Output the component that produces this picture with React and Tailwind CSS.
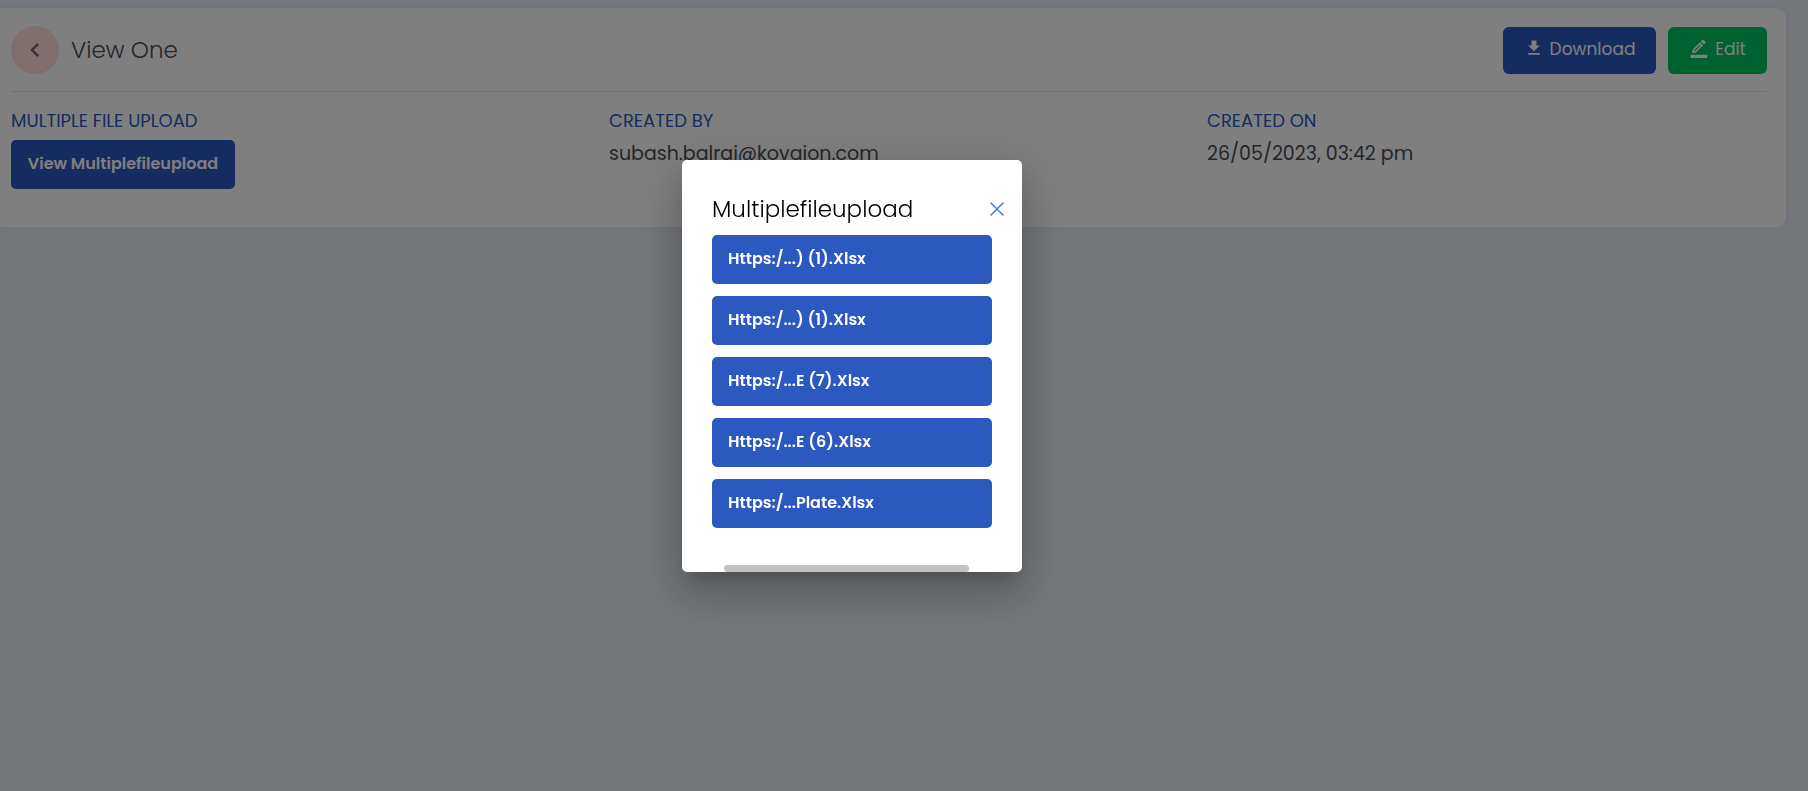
import React from 'react';
import { MdChevronLeft, MdFileDownload, MdOutlineBorderColor } from 'react-icons/md';

const files = [
  'Https:/...) (1).Xlsx',
  'Https:/...) (1).Xlsx',
  'Https:/...E (7).Xlsx',
  'Https:/...E (6).Xlsx',
  'Https:/...Plate.Xlsx',
];

const CloseIcon = () => (
  <svg width="24" height="24" viewBox="0 0 24 24" fill="none" stroke="currentColor" strokeWidth="1.6">
    <path d="M5.5 5.5l13 13M18.5 5.5l-13 13" />
  </svg>
);

const Field = ({ label, children }) => (
  <div className="flex flex-col items-start">
    <h2 className="text-[18px] leading-6 uppercase text-[#2b59c0]">{label}</h2>
    {children}
  </div>
);

const RecordView = () => (
  <main className="mr-[22px] rounded-r-[10px] bg-white pt-[18px] pr-[19px] pb-[38px] pl-[11px] shadow-[0_0_10px_rgba(130,160,190,0.15)]">
    <header className="flex items-center justify-between border-b border-[#e4e4e8] pb-[17px]">
      <div className="flex items-center gap-3">
        <button type="button" aria-label="Back" className="flex size-12 items-center justify-center rounded-full bg-[#ffdfdf] text-[#666]">
          <MdChevronLeft size={28} />
        </button>
        <h1 className="text-[23px] leading-8 font-light text-[#4b4b55]">View One</h1>
      </div>
      <div className="flex gap-3">
        <button type="button" className="flex h-[47px] w-[153px] items-center justify-center gap-[6px] rounded-[6px] bg-[#2b59c0] text-[17px] text-white">
          <MdFileDownload size={20} className="mb-1" />
          Download
        </button>
        <button type="button" className="flex h-[47px] w-[99px] items-center justify-center gap-[6px] rounded-[6px] bg-[#00c263] text-[17px] text-white">
          <MdOutlineBorderColor size={20} className="mb-1" />
          Edit
        </button>
      </div>
    </header>

    <section className="grid grid-cols-3 gap-[38px] pt-[17px]">
      <Field label="Multiple File Upload">
        <button type="button" className="mt-[7px] h-[49px] w-[224px] rounded-[5px] bg-[#2b59c0] pb-[2px] text-[16px] font-semibold text-white">
          View Multiplefileupload
        </button>
      </Field>
      <Field label="Created By">
        <p className="mt-[7px] text-[19px] leading-7 text-[#4b4b55]">subash.balraj@kovaion.com</p>
      </Field>
      <Field label="Created On">
        <p className="mt-[7px] text-[19px] leading-7 text-[#4b4b55]">26/05/2023, 03:42 pm</p>
      </Field>
    </section>
  </main>
);

const FilesDialog = () => (
  <div className="fixed inset-0 flex items-center justify-center bg-black/50 pr-[104px] pb-[59px]">
    <div
      role="dialog"
      aria-labelledby="files-title"
      className="flex w-[340px] flex-col rounded-[5px] bg-white shadow-[0_11px_15px_-7px_rgba(0,0,0,0.2),0_24px_38px_3px_rgba(0,0,0,0.14),0_9px_46px_8px_rgba(0,0,0,0.12)]"
    >
      <div className="flex items-center justify-between pt-[33px] pr-[13px] pb-[10px] pl-[30px]">
        <h2 id="files-title" className="text-[23px] leading-8 font-light text-black">Multiplefileupload</h2>
        <button type="button" aria-label="Close" className="text-[#4a80e8]">
          <CloseIcon />
        </button>
      </div>
      <ul className="flex flex-col gap-3 px-[30px] pb-[37px]">
        {files.map((file, i) => (
          <li key={i}>
            <button type="button" className="h-[49px] w-full rounded-[5px] bg-[#2b59c0] px-4 pb-[2px] text-left text-[16px] font-semibold text-white">
              {file}
            </button>
          </li>
        ))}
      </ul>
      {/* horizontal scroll thumb */}
      <div className="pr-[53px] pl-[42px]">
        <div className="h-[7px] rounded-[4px] bg-[#c2c2c2]" />
      </div>
    </div>
  </div>
);

export default function App() {
  return (
    <div className="min-h-screen overflow-hidden bg-[#e8eff5] pt-2 font-['Poppins','Inter',sans-serif]">
      <RecordView />
      <FilesDialog />
    </div>
  );
}
